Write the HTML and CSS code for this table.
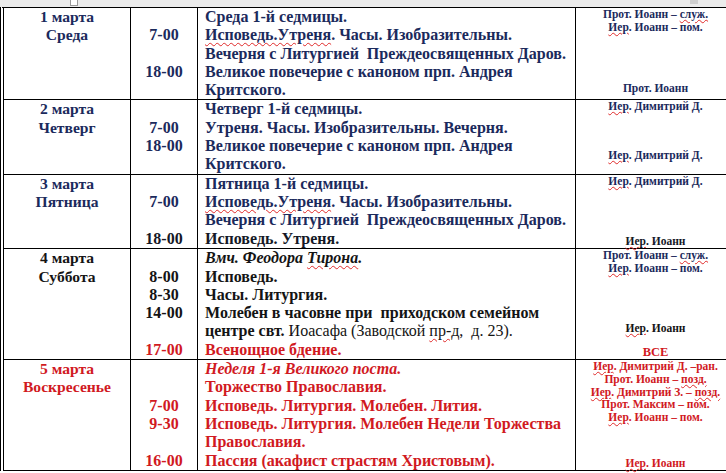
FILE: index.html
```html
<!DOCTYPE html>
<html lang="ru">
<head>
<meta charset="utf-8">
<title>Расписание богослужений</title>
<link rel="stylesheet" href="styles.css">
</head>
<body>
<div class="ruler"><span class="handle"></span><span class="mark"></span></div>
<table class="sched">
  <colgroup>
    <col class="c-date"><col class="c-time"><col class="c-desc"><col class="c-cl">
  </colgroup>
  <tr class="navy">
    <td class="date"><div class="ln">1 марта</div><div class="ln">Среда</div></td>
    <td class="time"><div class="ln"></div><div class="ln">7-00</div><div class="ln"></div><div class="ln">18-00</div></td>
    <td class="desc">
      <div class="ln">Среда 1-й седмицы.</div>
      <div class="ln"><span class="sp">Исповедь.Утреня</span>. Часы. Изобразительны.</div>
      <div class="ln">Вечерня с Литургией  Преждеосвященных Даров.</div>
      <div class="ln">Великое повечерие с каноном прп. Андрея</div>
      <div class="ln">Критского.</div>
    </td>
    <td class="cl">
      <div class="cln">Прот. Иоанн – <span class="sp">служ.</span></div>
      <div class="cln"><span class="sp">Иер</span>. Иоанн – пом.</div>
      <div class="cln mt48">Прот. Иоанн</div>
    </td>
  </tr>
  <tr class="navy">
    <td class="date"><div class="ln">2 марта</div><div class="ln">Четверг</div></td>
    <td class="time"><div class="ln"></div><div class="ln">7-00</div><div class="ln">18-00</div></td>
    <td class="desc">
      <div class="ln">Четверг 1-й седмицы.</div>
      <div class="ln">Утреня. Часы. Изобразительны. Вечерня.</div>
      <div class="ln">Великое повечерие с каноном прп. Андрея</div>
      <div class="ln">Критского.</div>
    </td>
    <td class="cl">
      <div class="cln"><span class="sp">Иер</span>. Димитрий Д.</div>
      <div class="cln mt36"><span class="sp">Иер</span>. Димитрий Д.</div>
    </td>
  </tr>
  <tr class="navy">
    <td class="date"><div class="ln">3 марта</div><div class="ln">Пятница</div></td>
    <td class="time"><div class="ln"></div><div class="ln">7-00</div><div class="ln"></div><div class="ln dark">18-00</div></td>
    <td class="desc">
      <div class="ln">Пятница 1-й седмицы.</div>
      <div class="ln"><span class="sp">Исповедь.Утреня</span>. Часы. Изобразительны.</div>
      <div class="ln">Вечерня с Литургией  Преждеосвященных Даров.</div>
      <div class="ln dark">Исповедь. Утреня.</div>
    </td>
    <td class="cl">
      <div class="cln"><span class="sp">Иер</span>. Димитрий Д.</div>
      <div class="cln mt48 dark"><span class="sp">Иер</span>. Иоанн</div>
    </td>
  </tr>
  <tr class="black">
    <td class="date"><div class="ln">4 марта</div><div class="ln">Суббота</div></td>
    <td class="time"><div class="ln"></div><div class="ln">8-00</div><div class="ln">8-30</div><div class="ln">14-00</div><div class="ln"></div><div class="ln red">17-00</div></td>
    <td class="desc">
      <div class="ln it">Вмч. Феодора <span class="sp">Тирона</span>.</div>
      <div class="ln">Исповедь.</div>
      <div class="ln">Часы. Литургия.</div>
      <div class="ln">Молебен в часовне при  приходском семейном</div>
      <div class="ln">центре свт. <span class="reg">Иоасафа (Заводской <span class="sp">пр-д</span>,  д. 23).</span></div>
      <div class="ln red">Всенощное бдение.</div>
    </td>
    <td class="cl">
      <div class="cln navyt">Прот. Иоанн – <span class="sp">служ.</span></div>
      <div class="cln navyt"><span class="sp">Иер</span>. Иоанн – пом.</div>
      <div class="cln mt47"><span class="sp">Иер</span>. Иоанн</div>
      <div class="cln mt11 red all">ВСЕ</div>
    </td>
  </tr>
  <tr class="redrow">
    <td class="date"><div class="ln">5 марта</div><div class="ln">Воскресенье</div></td>
    <td class="time"><div class="ln"></div><div class="ln"></div><div class="ln">7-00</div><div class="ln">9-30</div><div class="ln"></div><div class="ln">16-00</div></td>
    <td class="desc">
      <div class="ln it">Неделя 1-я Великого поста.</div>
      <div class="ln">Торжество Православия.</div>
      <div class="ln">Исповедь. Литургия. Молебен. Лития.</div>
      <div class="ln">Исповедь. Литургия. Молебен Недели Торжества</div>
      <div class="ln">Православия.</div>
      <div class="ln">Пассия (акафист страстям Христовым).</div>
    </td>
    <td class="cl">
      <div class="cln"><span class="sp">Иер</span>. Димитрий Д. –ран.</div>
      <div class="cln">Прот. Иоанн – <span class="sp">позд.</span></div>
      <div class="cln"><span class="sp">Иер</span>. Димитрий З. – <span class="sp">позд.</span></div>
      <div class="cln">Прот. Максим – пом.</div>
      <div class="cln"><span class="sp">Иер</span>. Иоанн – пом.</div>
      <div class="cln mt33"><span class="sp">Иер</span>. Иоанн</div>
    </td>
  </tr>
</table>
</body>
</html>
```

FILE: styles.css
```css
html, body {
  margin: 0;
  padding: 0;
  background: #ffffff;
  overflow: hidden;
}
body {
  width: 726px;
  height: 473px;
  font-family: "Liberation Serif", "Times New Roman", serif;
  font-weight: bold;
}
.ruler {
  height: 7px;
  background: #ebebeb;
  position: relative;
}
.handle {
  position: absolute;
  left: 70px;
  top: 0;
  width: 6px;
  height: 5px;
  border: 1px solid #9a9a9a;
  border-top: none;
  background: #ffffff;
}
.mark {
  position: absolute;
  left: 690px;
  top: 0;
  width: 8px;
  height: 4px;
  background: #cfcfcf;
}
.sched {
  border-collapse: separate;
  border-spacing: 0;
  border-top: 1px solid #000;
  border-left: 4px double #000;
  table-layout: fixed;
  width: 732px;
}
.c-date { width: 127px; }
.c-time { width: 67px; }
.c-desc { width: 378px; }
.c-cl { width: 160px; }
.sched td {
  padding: 0;
  vertical-align: top;
  border-right: 1px solid #000;
  border-bottom: 1px solid #000;
}
.ln {
  height: 18.3px;
  line-height: 18.3px;
  font-size: 16px;
  white-space: pre;
}
.date, .time { text-align: center; }
.date .ln { font-size: 15.6px; }
.desc { padding-left: 7px !important; }
.cl { text-align: center; }
.cln {
  font-size: 11.5px;
  line-height: 12.8px;
  height: 12.8px;
  white-space: pre;
}
.mt48 { margin-top: 48px; }
.mt47 { margin-top: 47px; }
.mt36 { margin-top: 36px; }
.mt33 { margin-top: 33px; }
.mt11 { margin-top: 11px; }
.all { font-size: 12.5px; }
.navy { color: #1b2a5c; }
.black { color: #141414; }
.redrow { color: #d11a1f; }
.red { color: #d11a1f; }
.dark { color: #141826; }
.navyt { color: #1b2a5c; }
.it { font-style: italic; }
.reg { font-weight: normal; }
.sp {
  text-decoration-line: underline;
  text-decoration-style: wavy;
  text-decoration-color: #e02a2a;
  text-decoration-thickness: 1px;
  text-underline-offset: 2px;
}
.cln .sp {
  text-underline-offset: 1px;
  text-decoration-thickness: 1px;
}
```
